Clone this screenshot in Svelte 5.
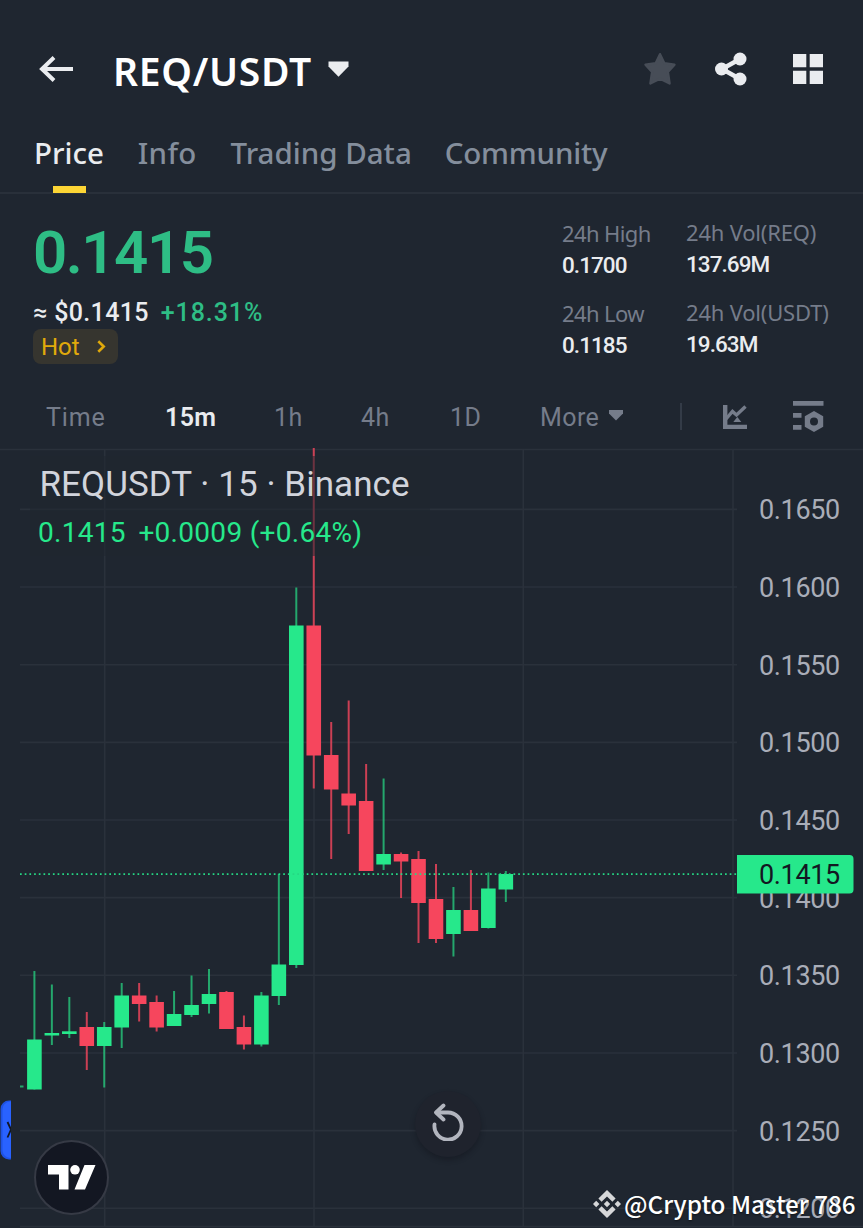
<script lang="ts">
	interface Candle {
		high: number;
		top: number;
		bottom: number;
		low: number;
		up: boolean;
	}

	const CANDLE_START = 34.4;
	const CANDLE_STEP = 17.46;
	const CANDLE_WIDTH = 14.6;

	const tabs = ['Price', 'Info', 'Trading Data', 'Community'];
	const intervals = ['Time', '15m', '1h', '4h', '1D'];

	const stats = [
		{ label: '24h High', value: '0.1700' },
		{ label: '24h Vol(REQ)', value: '137.69M' },
		{ label: '24h Low', value: '0.1185' },
		{ label: '24h Vol(USDT)', value: '19.63M' }
	];

	let activeTab = $state('Price');
	let activeInterval = $state('15m');

	const priceLevels = Array.from({ length: 10 }, (_, i) => ({
		label: (0.165 - i * 0.005).toFixed(4),
		y: 61.4 + i * 77.65
	}));
	const timeLines = [104.7, 314, 523.3, 733];

	// high, body top, body bottom, low, rising
	const rows: [number, number, number, number, number][] = [
		[523, 591.5, 641.5, 641.5, 1],
		[536.5, 585, 587.5, 597, 1],
		[549, 583.3, 586, 590, 1],
		[564, 579, 598, 622, 0],
		[574, 579, 598, 639.5, 1],
		[535, 547.5, 579.5, 600, 1],
		[535, 547.5, 556, 573.5, 0],
		[547.5, 554, 579.5, 583.5, 0],
		[543, 566, 578, 578, 1],
		[527.5, 557, 567, 569, 1],
		[521, 546, 556, 565.5, 1],
		[543, 544, 581, 581, 0],
		[567.5, 579, 596.5, 601.5, 0],
		[544, 547.5, 596.5, 598.5, 1],
		[426, 516.5, 548, 557, 1],
		[139.5, 177.5, 517, 520, 1],
		[0, 177.5, 307.5, 340.5, 0],
		[274, 307, 341.5, 411, 0],
		[252.5, 345.5, 357.5, 386, 0],
		[316, 353, 423, 423, 0],
		[330.5, 406, 416.5, 422, 1],
		[404.5, 406, 413.5, 450, 0],
		[403, 411, 455, 495, 0],
		[416, 451, 491, 495, 0],
		[439, 462, 486, 508.5, 1],
		[422, 462, 483, 483, 0],
		[424.5, 440.5, 480, 480.5, 1],
		[423, 426, 441.5, 454, 1]
	];
	const candles: Candle[] = rows.map(([high, top, bottom, low, up]) => ({
		high,
		top,
		bottom,
		low,
		up: up === 1
	}));
</script>

<main class="screen">
	<header class="topbar">
		<button class="back" aria-label="Back">
			<svg width="34" height="28" viewBox="0 0 34 28">
				<path d="M34 14H4M15 2.5L3 14L15 25.5" fill="none" stroke="currentColor" stroke-width="4" />
			</svg>
		</button>
		<h1>REQ/USDT</h1>
		<svg class="caret" width="21" height="16" viewBox="0 0 21 16">
			<path d="M.5 .5h20v5L10.5 15.8L.5 5.5z" fill="currentColor" />
		</svg>
		<div class="actions">
			<svg class="star" width="34" height="34" viewBox="0 0 34 34">
				<path
					d="M17 2.2L21.3 11.3L31.5 12.7L24.9 20L26.6 31.5L17 26.6L7.4 31.5L9.1 20L2.5 12.7L12.7 11.3Z"
					fill="currentColor"
					stroke="currentColor"
					stroke-width="2.4"
					stroke-linejoin="round"
				/>
			</svg>
			<svg width="32" height="34" viewBox="0 0 32 34">
				<path d="M25 7L7 17L25 27" fill="none" stroke="currentColor" stroke-width="4.5" />
				<circle cx="25" cy="7" r="6.5" fill="currentColor" />
				<circle cx="6.5" cy="17" r="6.5" fill="currentColor" />
				<circle cx="25" cy="27" r="6.5" fill="currentColor" />
			</svg>
			<svg width="30" height="30" viewBox="0 0 30 30">
				<path d="M0 0h13.3v13.3H0zM16.7 0H30v13.3H16.7zM0 16.7h13.3V30H0zM16.7 16.7H30V30H16.7z" fill="currentColor" />
			</svg>
		</div>
	</header>

	<nav class="tabs">
		{#each tabs as tab}
			<button class="tab" class:active={activeTab === tab} onclick={() => (activeTab = tab)}>{tab}</button>
		{/each}
	</nav>

	<section class="summary">
		<div class="quote">
			<div class="last">0.1415</div>
			<div class="change">
				<span>≈ $0.1415</span>
				<span class="gain">+18.31%</span>
			</div>
			<button class="hot">
				Hot
				<svg width="9" height="13" viewBox="0 0 9 13">
					<path d="M1.3 1.3L6.7 6.5L1.3 11.7" fill="none" stroke="currentColor" stroke-width="2.6" />
				</svg>
			</button>
		</div>
		<dl class="stats">
			{#each stats as stat}
				<div class="stat">
					<dt>{stat.label}</dt>
					<dd>{stat.value}</dd>
				</div>
			{/each}
		</dl>
	</section>

	<div class="toolbar">
		{#each intervals as interval}
			<button
				class="interval"
				class:active={activeInterval === interval}
				onclick={() => (activeInterval = interval)}
			>
				{interval}
			</button>
		{/each}
		<button class="interval more">
			More
			<svg width="14" height="11" viewBox="0 0 14 11">
				<path d="M0 0h14v3.5L7 10.5L0 3.5z" fill="currentColor" />
			</svg>
		</button>
		<span class="divider"></span>
		<svg class="chart-icon" width="24" height="24" viewBox="0 0 24 24">
			<path d="M2.2 0V22H24" fill="none" stroke="currentColor" stroke-width="4.4" />
			<path d="M3 14L9.5 6.5L13.5 10L22.5 1.5" fill="none" stroke="currentColor" stroke-width="3.4" />
			<path d="M14.3 12l4 5h-8z" fill="currentColor" />
		</svg>
		<svg width="31" height="32" viewBox="0 0 31 32">
			<path d="M0 0h30.5v4.8H0zM0 12h8.5v4.8H0zM0 24h8.5v4.8H0z" fill="currentColor" />
			<path
				fill-rule="evenodd"
				d="M21 10l9.2 5.2v10.6L21 31l-9.2-5.2V15.2zM21 16.5a4 4 0 1 0 0 8a4 4 0 1 0 0-8z"
				fill="currentColor"
			/>
		</svg>
	</div>

	<section class="chart">
		<svg class="plot" width="863" height="780" viewBox="0 0 863 780">
			<g class="grid">
				<path d="M0 1.5H863M20 778.5H863" />
				{#each priceLevels as level}
					<line x1="20" x2="737" y1={level.y} y2={level.y} />
				{/each}
				{#each timeLines as x}
					<line x1={x} x2={x} y1="1" y2="778" />
				{/each}
			</g>

			<path class="wick up" d="M20 638.5h3.5" />
			{#each candles as candle, i}
				{@const x = CANDLE_START + i * CANDLE_STEP}
				<line class="wick" class:up={candle.up} x1={x} x2={x} y1={candle.high} y2={candle.low} />
				<rect
					class="body"
					class:up={candle.up}
					x={x - CANDLE_WIDTH / 2}
					y={candle.top}
					width={CANDLE_WIDTH}
					height={candle.bottom - candle.top}
				/>
			{/each}

			<line class="last-line" x1="20" x2="737" y1="426.2" y2="426.2" />

			<g class="axis">
				{#each priceLevels as level}
					<text x="759" y={level.y + 10}>{level.label}</text>
				{/each}
			</g>
			<path d="M737 407h112.5a4 4 0 0 1 4 4v30.5a4 4 0 0 1-4 4H737z" fill="#26e88b" />
			<text class="tag" x="759" y="435.8">0.1415</text>
		</svg>

		<div class="legend">
			<div class="symbol">REQUSDT · 15 · Binance</div>
			<div class="values">
				<span>0.1415</span>
				<span>+0.0009 (+0.64%)</span>
			</div>
		</div>

		<button class="drawer" aria-label="Open drawing tools">
			<svg width="11" height="60" viewBox="0 0 11 60">
				<path d="M11 0.5H9A8.5 8.5 0 0 0 .5 9V51A8.5 8.5 0 0 0 9 59.5h2z" fill="#1e53e5" />
				<path d="M11 1.5C5 1.5 2.5 6 2.5 10v40c0 4 3 8 8.5 8z" fill="#2962ff" />
				<path d="M7.5 22l3.5 7.5l-3.5 8" fill="none" stroke="#131722" stroke-width="1.8" />
			</svg>
		</button>

		<button class="reset" aria-label="Reset chart">
			<svg width="34" height="38" viewBox="0 0 34 38">
				<path d="M3.5 21.5A13.6 13.6 0 1 0 17 9.5H6" fill="none" stroke="currentColor" stroke-width="3.8" stroke-linecap="round" />
				<path d="M12.5 2.5L5 9.5L12.5 16.5" fill="none" stroke="currentColor" stroke-width="3.8" stroke-linecap="round" stroke-linejoin="round" />
			</svg>
		</button>

		<div class="provider">
			<svg width="48" height="25" viewBox="0 0 48 25">
				<path d="M0 0h20.5v24.5H11V9.5H0zM36.5 0H47.5L37 24.5H26.5z" fill="#fff" />
				<circle cx="27" cy="4.8" r="4.8" fill="#fff" />
			</svg>
		</div>

		<div class="watermark">
			<svg width="28" height="28" viewBox="0 0 28 28">
				<path
					d="M14 0l8.6 8.6l-3.2 3.2L14 6.4l-5.4 5.4l-3.2-3.2zM14 28l8.6-8.6l-3.2-3.2L14 21.6l-5.4-5.4l-3.2 3.2zM14 10.8l3.2 3.2l-3.2 3.2l-3.2-3.2zM3.2 10.8L6.4 14l-3.2 3.2L0 14zM24.8 10.8L28 14l-3.2 3.2l-3.2-3.2z"
					fill="#d6d7d9"
				/>
			</svg>
			<span>@Crypto Master 786</span>
		</div>
	</section>
</main>

<style>
	:global(body) {
		margin: 0;
		background: #1f2630;
	}

	.screen {
		width: 863px;
		height: 1228px;
		overflow: hidden;
		background: #1f2630;
		color: #eaecef;
		font-family: Roboto, 'Liberation Sans', sans-serif;
	}

	button {
		padding: 0;
		border: 0;
		background: none;
		color: inherit;
		font: inherit;
		white-space: nowrap;
	}

	svg {
		display: block;
		flex: none;
	}

	.topbar {
		display: flex;
		align-items: center;
		height: 78px;
		padding: 30px 40px 0 39px;
	}

	h1 {
		width: 201px;
		margin: 2px 13px 0 40px;
		color: #fff;
		font: 600 39px/1 'Noto Sans', sans-serif;
		letter-spacing: 0.7px;
		white-space: nowrap;
	}

	.caret {
		margin-left: 1px;
	}

	.actions {
		display: flex;
		align-items: center;
		margin-left: auto;
		gap: 46px;
	}

	.star {
		margin-right: -8px;
		color: #474d57;
	}

	.tabs {
		display: flex;
		gap: 34px;
		height: 84px;
		padding-left: 34px;
		border-bottom: 2px solid #29303a;
		font: 500 29.5px/1 'Noto Sans', sans-serif;
		letter-spacing: -0.1px;
	}

	.tab {
		position: relative;
		padding-top: 5px;
		color: #848e9c;
	}

	.tab:nth-child(2) {
		letter-spacing: 0.3px;
	}

	.tab:last-child {
		margin-left: -1px;
		letter-spacing: -0.2px;
	}

	.tab.active {
		color: #eaecef;
	}

	.tab.active::after {
		content: '';
		position: absolute;
		left: 50%;
		bottom: -1px;
		width: 33px;
		height: 7px;
		margin-left: -16px;
		background: #fcd535;
	}

	.summary {
		display: flex;
		justify-content: space-between;
		height: 171px;
		padding: 22px 0 0 33px;
	}

	.last {
		height: 75px;
		color: #2ebd85;
		font-size: 60px;
		font-weight: 600;
		line-height: 74px;
		letter-spacing: -1.5px;
	}

	.change {
		display: flex;
		gap: 12px;
		margin-top: 6px;
		font-size: 25px;
		font-weight: 500;
		line-height: 32px;
		letter-spacing: 0.35px;
	}

	.gain {
		color: #2ebd85;
		letter-spacing: 0.9px;
	}

	.hot {
		display: flex;
		align-items: center;
		gap: 17px;
		width: 85px;
		height: 35px;
		padding-left: 8px;
		border-radius: 8px;
		background: #36352f;
		color: #e0a90b;
		font-size: 24px;
	}

	.stats {
		display: grid;
		grid-template-columns: 124px 177px;
		grid-template-rows: 80px 80px;
		margin: 0;
	}

	.stat:nth-child(even) {
		margin-top: -1px;
	}

	dt {
		margin-top: 1px;
		color: #757c8a;
		font: 22px/32px 'Noto Sans', sans-serif;
		letter-spacing: -0.4px;
		white-space: nowrap;
	}

	.stat:nth-child(even) dt {
		letter-spacing: -0.2px;
	}

	.stat:nth-child(odd) dt {
		letter-spacing: -0.6px;
	}

	dd {
		margin: 0;
		font-size: 22.5px;
		font-weight: 500;
		line-height: 33px;
		letter-spacing: -0.95px;
	}

	.toolbar {
		display: flex;
		align-items: center;
		height: 63px;
		margin-top: -2px;
		padding-left: 46px;
		color: #757c8a;
		font-size: 25px;
	}

	.interval {
		width: 87px;
		margin-top: 2px;
		text-align: left;
		letter-spacing: 0.4px;
	}

	.interval:first-child {
		width: 119px;
		letter-spacing: 0.9px;
	}

	.interval:nth-child(2) {
		width: 109px;
	}

	.interval:nth-child(4) {
		width: 89px;
	}

	.interval:nth-child(5) {
		width: 90px;
	}

	.interval.active {
		color: #eaecef;
		font-weight: 600;
	}

	.interval.more {
		display: flex;
		align-items: center;
		gap: 10px;
		width: 140px;
	}

	.more svg {
		margin-top: -5px;
	}

	.divider {
		width: 2px;
		height: 27px;
		margin-right: 41px;
		background: #333b47;
	}

	.chart-icon {
		margin-right: 46px;
	}

	.chart {
		position: relative;
		height: 780px;
	}

	.grid {
		stroke: #2a313b;
		stroke-width: 1.6;
	}

	.wick {
		stroke: #f6465d;
		stroke-width: 2;
		opacity: 0.8;
	}

	.wick.up {
		stroke: #26c87c;
	}

	.body {
		fill: #f6465d;
	}

	.body.up {
		fill: #26e88b;
	}

	.last-line {
		stroke: #26d884;
		stroke-width: 1.7;
		stroke-dasharray: 1.7 3;
	}

	.axis,
	.tag {
		font-size: 27px;
		letter-spacing: -0.35px;
	}

	.axis {
		fill: #a9adb8;
	}

	.tag {
		fill: #131722;
	}

	.legend {
		position: absolute;
		top: 8px;
		left: 30px;
		width: 400px;
		height: 99px;
		padding-top: 1px;
		background: rgba(31, 38, 48, 0.55);
	}

	.symbol {
		padding-left: 9.5px;
		color: #d1d4dc;
		font-size: 35px;
		line-height: 56px;
		letter-spacing: 0.05px;
	}

	.values {
		display: flex;
		gap: 12.5px;
		padding-left: 8px;
		color: #26e88b;
		font-size: 28px;
		line-height: 40px;
		letter-spacing: 0.3px;
	}

	.drawer {
		position: absolute;
		top: 652px;
		left: 0;
	}

	.reset {
		position: absolute;
		top: 643px;
		left: 415px;
		display: flex;
		align-items: center;
		justify-content: center;
		width: 66px;
		height: 66px;
		border-radius: 50%;
		background: #1f232d;
		color: #b2b5be;
		box-shadow: 0 3px 5px rgba(15, 18, 26, 0.4);
	}

	.reset svg {
		margin-top: -5px;
	}

	.provider {
		position: absolute;
		top: 692px;
		left: 34px;
		display: flex;
		align-items: center;
		justify-content: center;
		box-sizing: border-box;
		width: 75px;
		height: 75px;
		border: 2px solid #363a45;
		border-radius: 50%;
		background: #131722;
	}

	.watermark {
		position: absolute;
		top: 737px;
		left: 593px;
		display: flex;
		align-items: center;
		gap: 3px;
		color: #fff;
		font: 500 24.2px/38px 'Noto Sans CJK SC', sans-serif;
		white-space: nowrap;
		text-shadow: 0 1px 2px rgba(0, 0, 0, 0.5);
	}
</style>
